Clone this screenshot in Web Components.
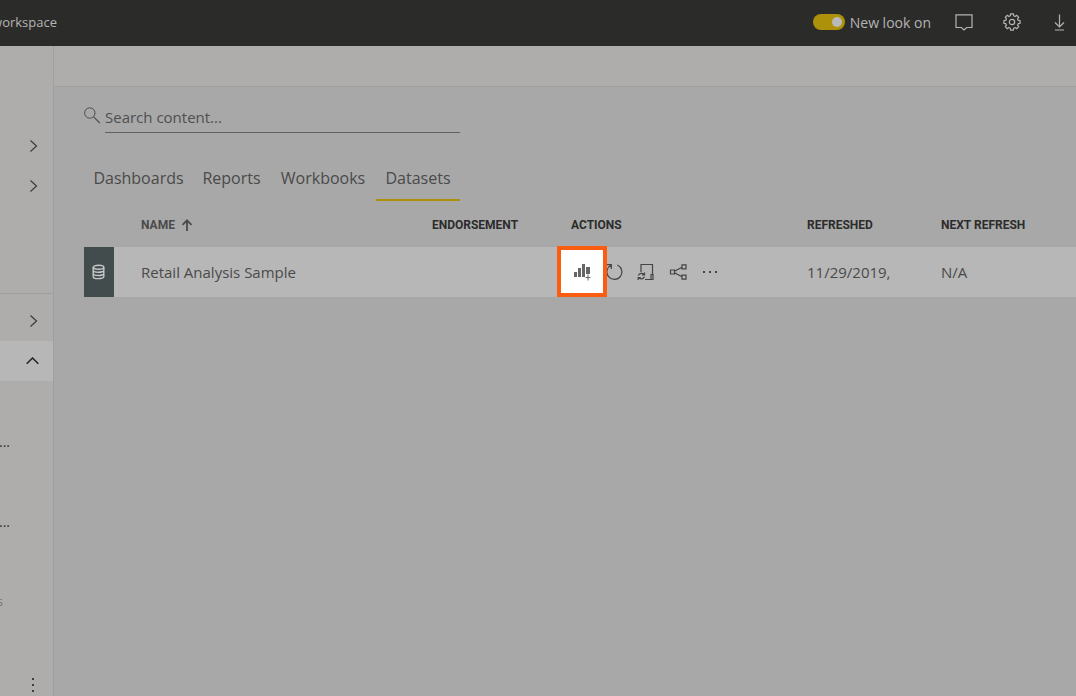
<!DOCTYPE html>
<html lang="en">
<head>
<meta charset="utf-8">
<title>My workspace</title>
<style>
  html, body { height: 100%; margin: 0; }
  body {
    overflow: hidden;
    background: #a8a8a8;
    color: #4a4a4a;
    font-family: "Open Sans", "Noto Sans", sans-serif;
    font-size: 15px;
  }
</style>
</head>
<body>
<app-shell>
  <app-header slot="header"></app-header>
  <side-nav slot="nav"></side-nav>
  <search-box></search-box>
  <content-tabs></content-tabs>
  <dataset-table></dataset-table>
</app-shell>

<script>
const define = (name, html, setup) => {
  const template = document.createElement('template');
  template.innerHTML = html;
  customElements.define(name, class extends HTMLElement {
    constructor() {
      super();
      this.attachShadow({ mode: 'open' }).append(template.content.cloneNode(true));
    }
    connectedCallback() { if (setup) setup(this, this.shadowRoot); }
  });
};

const ICONS = {
  right: [9, 13, '<path d="M1.500 .5l6 5.500-6 5.500" stroke-width="1.200"/>'],
  up: [13, 8, '<path d="M.7 6.800l5.800-5.800 5.800 5.800" stroke-width="1.500"/>'],
  more: [4, 16, '<g fill="currentColor" stroke="none"><path d="M1 1h2v2H1zM1 7h2v2H1zM1 13h2v2H1z"/></g>'],
  search: [18, 18, '<circle cx="5.800" cy="6" r="5.200"/><path d="M9.600 9.800l6.200 6.200" stroke-width="1.200"/>'],
  sort: [12, 12, '<path d="M6 12V1.5M1.5 5.8L6 1.3l4.500 4.500" stroke-width="1.8"/>'],
  comment: [18, 17, '<path d="M1 .8h16v12.700h-5.200L9 16l-2.500-2.500H1z" stroke-width="1.200"/>'],
  gear: [18, 18, ''],
  download: [12, 17, '<path d="M6.500 .5V13M2 8.500L6.500 13l4.500-4.500M2 16h9" stroke-width="1.200"/>'],
  database: [14, 16, '<g stroke-width="1.400"><ellipse cx="6.500" cy="3.300" rx="5.300" ry="2"/><path d="M1.200 3.300v9.400c0 2.600 10.600 2.600 10.600 0V3.300M1.200 6.300c0 2.600 10.600 2.600 10.600 0M1.200 9.500c0 2.600 10.600 2.600 10.600 0"/></g>'],
  report: [18, 18, '<g fill="currentColor" stroke="none"><path d="M1 9h3v5H1zM5 5h3v9H5zM9 1h3v13H9zM13 4h4v7h-4z"/></g><path d="M15 11.500v6M12.500 14.500h5"/>'],
  refresh: [18, 18, '<path d="M5.800 2.300a7.500 7.500 0 1 0 6.500-.3M2 1.700h4.300v4.300" stroke-width="1.200"/>'],
  schedule: [18, 18, '<g stroke-width="1.200"><path d="M4 9V1.500h11.500V11M8 16.500h8V11.500h-2v5"/><path d="M1.300 12.600c1-2.500 4.200-3 5.700-1M7.500 9.500V12H5M7.400 13.700c-1 2.500-4.200 3-5.700 1M1.200 17v-2.500h2.500"/></g>'],
  related: [18, 16, '<path d="M1.500 6h4v4h-4zM13 .8h4v4h-4zM13 11.200h4v4h-4zM5.500 7.200l7.500-4M5.500 8.800l7.500 4" stroke-width="1.200"/>'],
  ellipsis: [18, 18, '<g fill="currentColor" stroke="none"><path d="M2 8h2v2H2zM8 8h2v2H8zM14 8h2v2h-2z"/></g>']
};

/* The gear outline: eight teeth round a circle, plus a small hub. */
const gearPath = (() => {
  const points = [];
  for (let i = 0; i < 8; i++) {
    for (const [offset, radius] of [[-15, 6.4], [-10, 8.2], [10, 8.2], [15, 6.4]]) {
      const angle = (i * 45 + offset) * Math.PI / 180;
      points.push((9 + radius * Math.cos(angle)).toFixed(2) + ' ' + (9 + radius * Math.sin(angle)).toFixed(2));
    }
  }
  return 'M' + points.join('L') + 'z';
})();
ICONS.gear[2] = `<path d="${gearPath}" stroke-linejoin="round" stroke-width="1.200"/><circle cx="9" cy="9" r="2.700" stroke-width="1.200"/>`;

define('ui-icon', `
  <style>
    :host { display: inline-flex; flex: none; }
    svg { display: block; fill: none; stroke: currentColor; }
  </style>`,
  (host, root) => {
    if (root.querySelector('svg')) return;
    const [w, h, art] = ICONS[host.getAttribute('name')];
    root.innerHTML += `<svg width="${w}" height="${h}" viewBox="0 0 ${w} ${h}" aria-hidden="true">${art}</svg>`;
  });

define('app-shell', `
  <style>
    :host { display: grid; grid-template: 46px 1fr / 53px 1fr; height: 100vh; }
    slot[name=header] { display: block; grid-column: 1 / -1; }
    main { border-left: 1px solid #a0a0a0; min-width: 0; }
    .bar { height: 40px; background: #aeadab; border-bottom: 1px solid #a0a0a0; }
    .content { padding: 16px 0 0 30px; }
  </style>
  <slot name="header"></slot>
  <slot name="nav"></slot>
  <main>
    <div class="bar"></div>
    <div class="content"><slot></slot></div>
  </main>`);

define('app-header', `
  <style>
    :host { display: block; height: 46px; background: #2b2b2a; color: #b4b4b4; font-size: 14px; overflow: hidden; }
    header { display: flex; height: 44px; justify-content: space-between; align-items: center; }
    .crumb { display: flex; justify-content: flex-end; width: 57px; overflow: hidden; font-size: 13px; color: inherit; text-decoration: none; white-space: nowrap; }
    .tools { display: flex; align-items: center; }
    label { display: flex; align-items: center; gap: 5px; margin-right: 9px; }
    input { appearance: none; box-sizing: border-box; margin: 0; width: 32px; height: 16px; border-radius: 8px; padding: 3px; background: #ae910b; display: flex; justify-content: flex-end; }
    input::before { content: ""; width: 10px; height: 10px; border-radius: 50%; background: #b9b9b9; }
    button { display: flex; align-items: center; justify-content: center; width: 48px; height: 44px; padding: 0; border: 0; background: none; color: inherit; }
    .last { width: 46px; margin-right: -6px; }
  </style>
  <header>
    <a class="crumb" href="#">workspace</a>
    <div class="tools">
      <label><input type="checkbox" role="switch" checked>New look on</label>
      <button aria-label="Comments"><ui-icon name="comment"></ui-icon></button>
      <button aria-label="Settings"><ui-icon name="gear"></ui-icon></button>
      <button class="last" aria-label="Download"><ui-icon name="download"></ui-icon></button>
    </div>
  </header>`);

define('side-nav', `
  <style>
    :host { display: block; background: #aeadab; overflow: hidden; color: #3c3c3c; }
    nav { display: flex; flex-direction: column; }
    section { display: flex; flex-direction: column; }
    .top { box-sizing: border-box; height: 248px; padding-top: 80px; border-bottom: 1px solid #9f9f9e; }
    .spaces { padding-top: 7px; }
    button { display: flex; align-items: center; justify-content: flex-end; width: 100%; height: 40px; padding: 0 15px; border: 0; background: none; color: inherit; }
    .open { background: #b7b7b7; color: #222; padding-right: 14px; }
    .items { padding-top: 40px; gap: 40px; }
    a { box-sizing: border-box; display: flex; align-items: center; justify-content: flex-end; height: 40px; width: 10px; overflow: hidden; color: #333; text-decoration: none; font-size: 14px; }
    .label { display: flex; justify-content: flex-end; align-items: center; height: 40px; width: 3px; margin-top: 40px; overflow: hidden; color: #777; font-size: 12px; }
    .more { margin-top: 44px; padding-right: 18px; }
  </style>
  <nav aria-label="Workspaces">
    <section class="top">
      <button aria-label="Expand favorites"><ui-icon name="right"></ui-icon></button>
      <button aria-label="Expand recent"><ui-icon name="right"></ui-icon></button>
    </section>
    <section class="spaces">
      <button aria-label="Expand workspaces"><ui-icon name="right"></ui-icon></button>
      <button class="open" aria-label="Collapse my workspace"><ui-icon name="up"></ui-icon></button>
    </section>
    <section class="items">
      <a href="#">...</a>
      <a href="#">...</a>
    </section>
    <div class="label">s</div>
    <button class="more" aria-label="More options"><ui-icon name="more"></ui-icon></button>
  </nav>`);

define('search-box', `
  <style>
    :host { display: block; }
    label { display: flex; width: 376px; height: 30px; color: #4f4f4f; }
    ui-icon { width: 21px; margin-top: 4px; }
    input { flex: 1; min-width: 0; box-sizing: border-box; padding: 0 0 2px; border: 0; border-bottom: 1px solid #606060; border-radius: 0; background: none; font: inherit; color: inherit; outline: 0; }
    input::placeholder { color: #4f4f4f; opacity: 1; }
  </style>
  <label><ui-icon name="search"></ui-icon><input type="text" placeholder="Search content..." aria-label="Search content"></label>`);

define('content-tabs', `
  <style>
    :host { display: block; margin-top: 22px; }
    nav { display: grid; grid-template-columns: 109px 77px 106px 84px; }
    a { box-sizing: border-box; height: 46px; line-height: 46px; text-align: center; color: #4a4a4a; text-decoration: none; font-size: 16px; border-bottom: 2px solid transparent; }
    a[aria-current] { border-color: #ae910b; }
  </style>
  <nav aria-label="Content">
    <a href="#">Dashboards</a>
    <a href="#">Reports</a>
    <a href="#">Workbooks</a>
    <a href="#" aria-current="page">Datasets</a>
  </nav>`);

define('dataset-table', `
  <style>
    :host { display: block; }
    table { width: 100%; table-layout: fixed; border-collapse: collapse; }
    th, td { padding: 0; text-align: left; white-space: nowrap; }
    th { box-sizing: border-box; height: 46px; padding-top: 2px; font: bold 12px Roboto, sans-serif; color: #2c2c2c; }
    td { height: 50px; background: #b7b7b7; color: #4a4a4a; }
    .type { width: 30px; }
    .name { box-sizing: border-box; width: 318px; padding-left: 27px; }
    .endorsement { width: 134px; }
    .actions { width: 241px; }
    .refreshed { width: 134px; }
    th.name { color: #4a4a4a; }
    th.name span { display: flex; align-items: center; gap: 6px; }
    th.actions { padding-left: 5px; }
    td.type { background: #434c4c; color: #c4c8c8; }
    td.type ui-icon { display: flex; justify-content: center; }
    .buttons { display: flex; align-items: center; }
    button { position: relative; display: flex; align-items: center; justify-content: center; width: 32px; height: 32px; padding: 0; border: 0; background: none; color: #444; }
    .create { z-index: 1; color: #666; }
    .create::before { content: ""; position: absolute; z-index: -1; inset: -10px -9px -9px; border: 4px solid #fa5c10; background: #fff; }
  </style>
  <table>
    <thead>
      <tr>
        <th class="type"></th>
        <th class="name"><span>NAME <ui-icon name="sort"></ui-icon></span></th>
        <th class="endorsement">ENDORSEMENT</th>
        <th class="actions">ACTIONS</th>
        <th class="refreshed">REFRESHED</th>
        <th>NEXT REFRESH</th>
      </tr>
    </thead>
    <tbody>
      <tr>
        <td class="type"><ui-icon name="database"></ui-icon></td>
        <td class="name">Retail Analysis Sample</td>
        <td></td>
        <td>
          <div class="buttons">
            <button class="create" aria-label="Create report"><ui-icon name="report"></ui-icon></button>
            <button aria-label="Refresh now"><ui-icon name="refresh"></ui-icon></button>
            <button aria-label="Schedule refresh"><ui-icon name="schedule"></ui-icon></button>
            <button aria-label="View related"><ui-icon name="related"></ui-icon></button>
            <button aria-label="More"><ui-icon name="ellipsis"></ui-icon></button>
          </div>
        </td>
        <td>11/29/2019,</td>
        <td>N/A</td>
      </tr>
    </tbody>
  </table>`);
</script>
</body>
</html>
